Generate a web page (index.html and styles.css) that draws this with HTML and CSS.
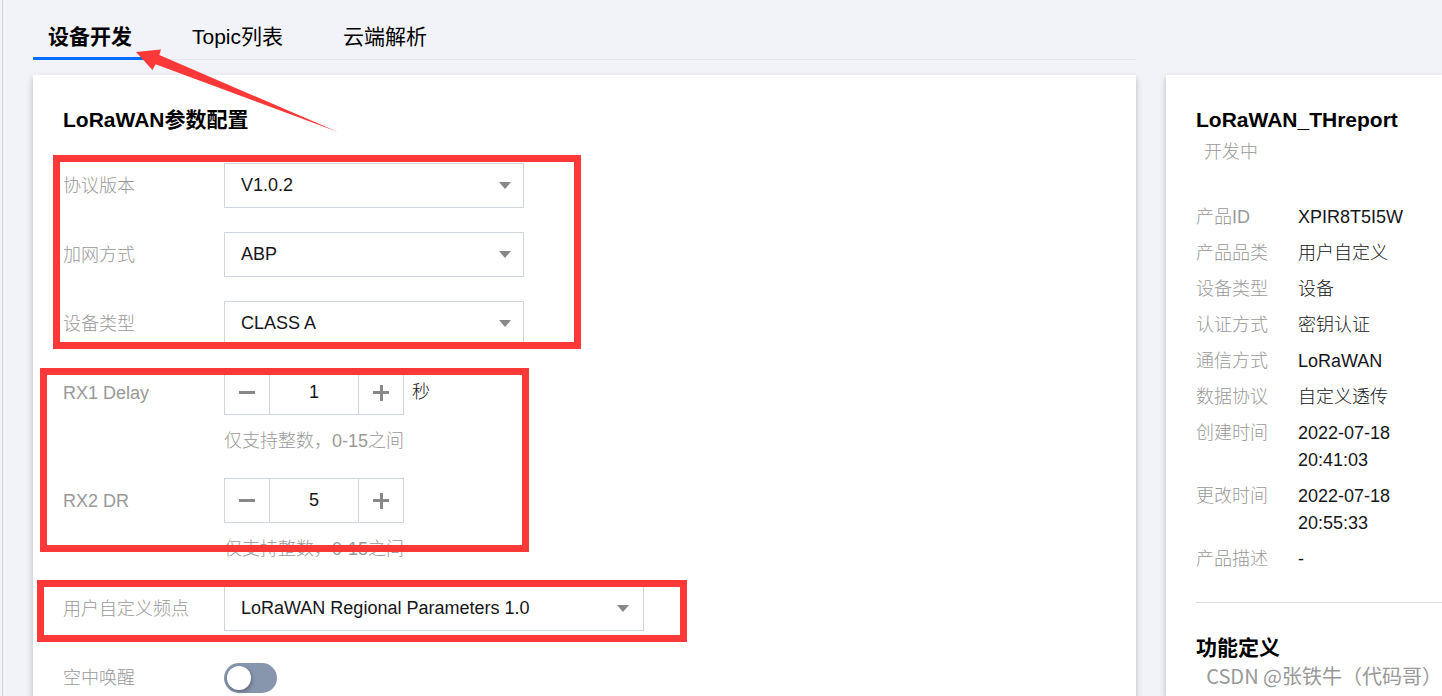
FILE: index.html
```
<!DOCTYPE html>
<html lang="zh-CN">
<head>
  <meta charset="UTF-8" />
  <meta name="viewport" content="width=device-width, initial-scale=1.0"/>
  <title>设备开发</title>
  <link rel="stylesheet" href="styles.css">
</head>
<body>
  <div class="page">
    <main class="main">
      <nav class="tabs">
        <a href="#dev" class="tab active">设备开发</a>
        <a href="#topic" class="tab">Topic列表</a>
        <a href="#parse" class="tab">云端解析</a>
      </nav>

      <form class="card">
        <h2>LoRaWAN参数配置</h2>

        <div class="row">
          <label for="version">协议版本</label>
          <div class="select">
            <select id="version"><option>V1.0.2</option></select>
          </div>
        </div>
        <div class="row">
          <label for="joinMode">加网方式</label>
          <div class="select">
            <select id="joinMode"><option>ABP</option></select>
          </div>
        </div>
        <div class="row">
          <label for="deviceClass">设备类型</label>
          <div class="select">
            <select id="deviceClass"><option>CLASS A</option></select>
          </div>
        </div>
        <div class="row">
          <label for="rx1">RX1 Delay</label>
          <div>
            <div class="control">
              <div class="stepper">
                <button type="button" class="minus" aria-label="减少"></button>
                <input id="rx1" type="text" inputmode="numeric" value="1">
                <button type="button" class="plus" aria-label="增加"></button>
              </div>
              <span>秒</span>
            </div>
            <p class="hint">仅支持整数，0-15之间</p>
          </div>
        </div>
        <div class="row">
          <label for="rx2">RX2 DR</label>
          <div>
            <div class="control">
              <div class="stepper">
                <button type="button" class="minus" aria-label="减少"></button>
                <input id="rx2" type="text" inputmode="numeric" value="5">
                <button type="button" class="plus" aria-label="增加"></button>
              </div>
            </div>
            <p class="hint">仅支持整数，0-15之间</p>
          </div>
        </div>
        <div class="row">
          <label for="freq">用户自定义频点</label>
          <div class="select wide">
            <select id="freq"><option>LoRaWAN Regional Parameters 1.0</option></select>
          </div>
        </div>
        <div class="row">
          <label for="wake">空中唤醒</label>
          <div class="control">
            <input id="wake" type="checkbox" class="switch">
          </div>
        </div>
      </form>
    </main>

    <aside class="card side">
      <h2>LoRaWAN_THreport</h2>
      <p class="status">开发中</p>
      <dl>
        <dt>产品ID</dt><dd>XPIR8T5I5W</dd>
        <dt>产品品类</dt><dd>用户自定义</dd>
        <dt>设备类型</dt><dd>设备</dd>
        <dt>认证方式</dt><dd>密钥认证</dd>
        <dt>通信方式</dt><dd>LoRaWAN</dd>
        <dt>数据协议</dt><dd>自定义透传</dd>
        <dt>创建时间</dt><dd>2022-07-18 20:41:03</dd>
        <dt>更改时间</dt><dd>2022-07-18 20:55:33</dd>
        <dt>产品描述</dt><dd>-</dd>
      </dl>
      <hr>
      <h2>功能定义</h2>
    </aside>

    <!-- red marks over the form -->
    <div class="mark mark-basic"></div>
    <div class="mark mark-rx"></div>
    <div class="mark mark-freq"></div>
    <svg class="arrow" width="204" height="84" viewBox="0 0 204 84" aria-hidden="true">
      <path d="M0 3 L25 0.5 L23.3 6 L202 83 L19.5 15.2 L16.5 21 Z" fill="#fc3938"/>
    </svg>
    <span class="watermark">CSDN @张铁牛（代码哥）</span>
  </div>
</body>
</html>
```
FILE: styles.css
```
:root {
  --bg-color: #f2f3f8;
  --text-color: #16161a;
  --muted: #999;
  --border: #cfd5de;
  --primary: #006eff;
  --mark: #fc3938;
}

* {
  box-sizing: border-box;
}

body {
  margin: 0;
  background: var(--bg-color);
  color: var(--text-color);
  font-family: "Liberation Sans", "Noto Sans CJK SC", sans-serif;
  font-size: 18px;
  font-weight: 300;
  line-height: 27px;
}

.page {
  position: relative;
  display: flex;
  gap: 30px;
  height: 100vh;
  margin-left: 2px;
  padding: 14px 0 0 30px;
  border-left: 1px solid #cdd2de;
  overflow: hidden;
}

.main {
  flex: 1;
  display: flex;
  flex-direction: column;
}

.tabs {
  display: flex;
  gap: 30px;
  height: 46px;
  margin-bottom: 15px;
  box-shadow: inset 0 -1px #e5e6eb;
}

.tab {
  padding: 0 15px;
  color: #000;
  font-size: 21px;
  font-weight: 400;
  line-height: 46px;
  text-decoration: none;
}

.tab.active {
  font-weight: bold;
  border-bottom: 3px solid var(--primary);
}

.card {
  flex: 1;
  padding: 30px;
  background: #fff;
  box-shadow: 0 3px 6px rgba(54, 58, 80, 0.32);
}

h2 {
  margin: 0;
  color: #000;
  font-size: 21px;
  line-height: 30px;
}

form h2 {
  margin-bottom: 28px;
}

.row {
  display: flex;
  height: 45px;
  margin-bottom: 24px;
}

.row:has(.hint) {
  height: 84px;
}

.row > label {
  width: 161px;
  color: var(--muted);
  line-height: 47px;
}

.select {
  position: relative;
  width: 300px;
}

.select.wide {
  width: 420px;
}

.select::after {
  content: "";
  position: absolute;
  top: 19px;
  right: 13px;
  border: 6px solid transparent;
  border-top: 7px solid #888;
  border-bottom: 0;
  pointer-events: none;
}

.select.wide::after {
  right: 15px;
}

select,
.stepper {
  height: 45px;
  border: 1px solid var(--border);
}

select {
  width: 100%;
  padding: 0 16px;
  appearance: none;
  background: #fff;
  color: inherit;
  font: inherit;
  border-radius: 0;
}

.control {
  display: flex;
  align-items: center;
  gap: 8px;
  height: 45px;
}

.stepper {
  display: flex;
  width: 180px;
}

.stepper input {
  flex: 1;
  min-width: 0;
  padding: 0;
  border: 1px solid var(--border);
  border-width: 0 1px;
  color: inherit;
  font: inherit;
  text-align: center;
}

.stepper button {
  width: 44px;
  padding: 0;
  border: none;
  background: linear-gradient(#888, #888) center / 16px 3px no-repeat;
}

.stepper .plus {
  background: linear-gradient(#888, #888) center / 16px 3px no-repeat,
    linear-gradient(#888, #888) center / 3px 16px no-repeat;
}

.hint {
  margin: 13px 0 0;
  color: var(--muted);
}

.switch {
  width: 53px;
  height: 30px;
  margin: 0;
  padding: 3px;
  appearance: none;
  background: #8795ad;
  border-radius: 15px;
}

.switch::before {
  content: "";
  display: block;
  width: 24px;
  height: 24px;
  background: #fff;
  border-radius: 50%;
  box-shadow: 1px 2px 4px rgba(0, 0, 0, 0.3);
}

.side {
  flex: 0 0 276px;
  margin-top: 61px;
  padding-right: 0;
}

.status {
  margin: 4px 0 38px;
  padding-left: 8px;
  color: var(--muted);
}

dl {
  display: grid;
  grid-template-columns: 102px 120px;
  row-gap: 9px;
  margin: 0;
}

dt {
  color: var(--muted);
}

dd {
  margin: 0;
}

hr {
  margin: 29px 0 30px;
  border: none;
  border-top: 1px solid #ddd;
}

.mark {
  position: absolute;
  border: 7px solid var(--mark);
  pointer-events: none;
}

.mark-basic {
  top: 155px;
  left: 50px;
  width: 528px;
  height: 194px;
}

.mark-rx {
  top: 368px;
  left: 37px;
  width: 489px;
  height: 184px;
}

.mark-freq {
  top: 580px;
  left: 34px;
  width: 650px;
  height: 62px;
}

.arrow {
  position: absolute;
  top: 49px;
  left: 133px;
  pointer-events: none;
}

.watermark {
  position: absolute;
  right: 0;
  bottom: 7px;
  color: #999;
  font-family: "Noto Sans CJK SC", sans-serif;
  font-size: 20px;
  font-weight: 400;
  white-space: nowrap;
}
```
